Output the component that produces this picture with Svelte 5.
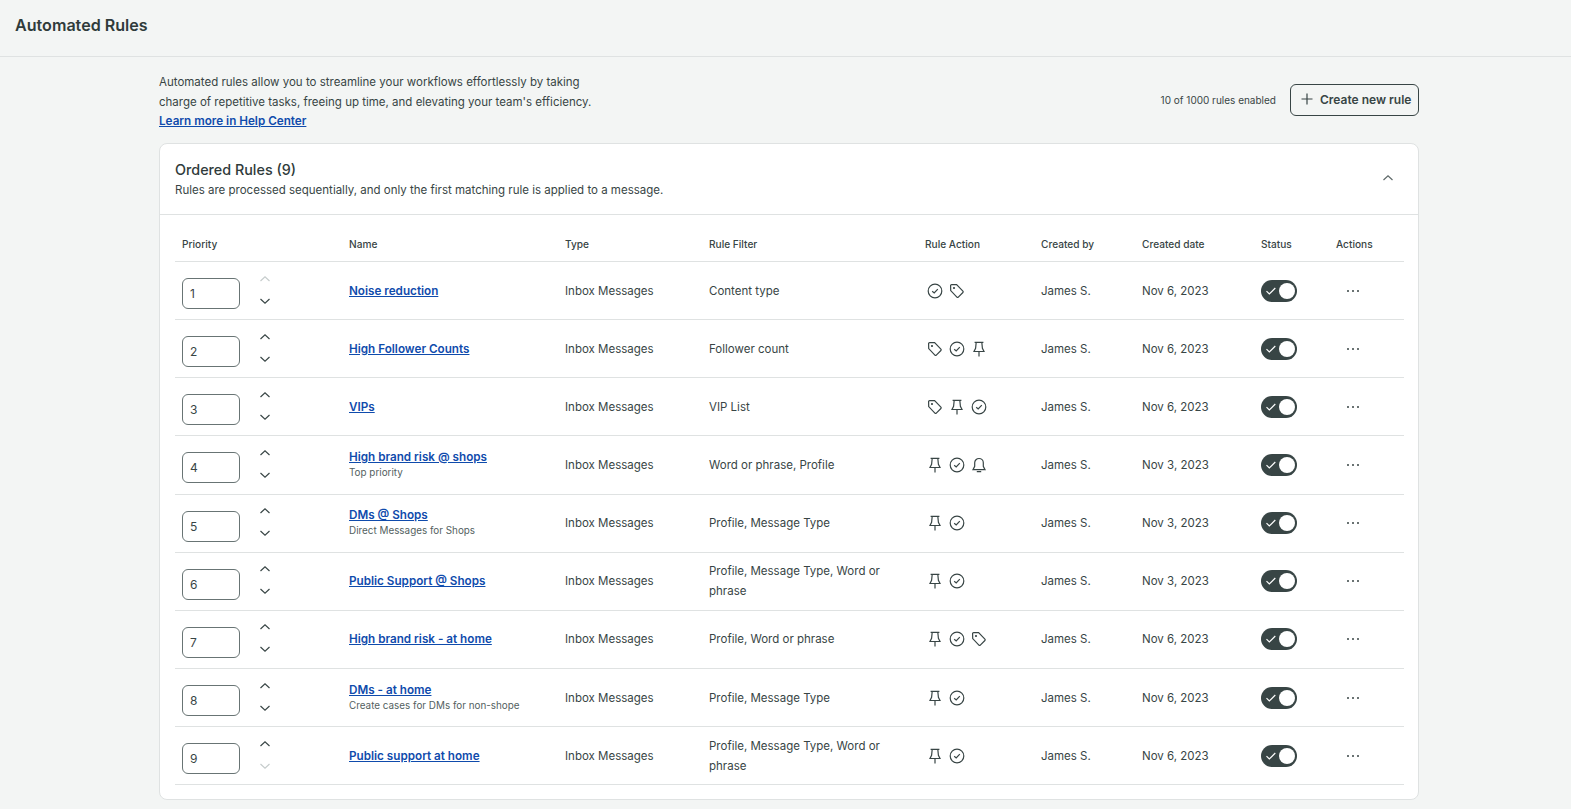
<script>
    const rules = [
        { name: 'Noise reduction', filter: 'Content type', icons: ['check', 'tag'], by: 'Nov 6, 2023' },
        { name: 'High Follower Counts', filter: 'Follower count', icons: ['tag', 'check', 'pin'], by: 'Nov 6, 2023' },
        { name: 'VIPs', filter: 'VIP List', icons: ['tag', 'pin', 'check'], by: 'Nov 6, 2023' },
        { name: 'High brand risk @ shops', sub: 'Top priority', filter: 'Word or phrase, Profile', icons: ['pin', 'check', 'bell'], by: 'Nov 3, 2023' },
        { name: 'DMs @ Shops', sub: 'Direct Messages for Shops', filter: 'Profile, Message Type', icons: ['pin', 'check'], by: 'Nov 3, 2023' },
        { name: 'Public Support @ Shops', filter: 'Profile, Message Type, Word or phrase', icons: ['pin', 'check'], by: 'Nov 3, 2023' },
        { name: 'High brand risk - at home', filter: 'Profile, Word or phrase', icons: ['pin', 'check', 'tag'], by: 'Nov 6, 2023' },
        { name: 'DMs - at home', sub: 'Create cases for DMs for non-shope', filter: 'Profile, Message Type', icons: ['pin', 'check'], by: 'Nov 6, 2023' },
        { name: 'Public support at home', filter: 'Profile, Message Type, Word or phrase', icons: ['pin', 'check'], by: 'Nov 6, 2023' },
    ];
    const headers = ['Priority', 'Name', 'Type', 'Rule Filter', 'Rule Action', 'Created by', 'Created date', 'Status', 'Actions'];
</script>

<header class="topbar"><h1>Automated Rules</h1></header>

<main>
    <section class="intro">
        <div class="intro-text">
            <p>Automated rules allow you to streamline your workflows effortlessly by taking<br />charge of repetitive tasks, freeing up time, and elevating your team's efficiency.</p>
            <a href="#help">Learn more in Help Center</a>
        </div>
        <div class="intro-actions">
            <span class="count">10 of 1000 rules enabled</span>
            <button class="create">
                <svg width="14" height="14" viewBox="0 0 14 14"><path d="M7 1.5v11M1.5 7h11" /></svg>
                Create new rule
            </button>
        </div>
    </section>

    <section class="card">
        <div class="card-head">
            <div>
                <h2>Ordered Rules (9)</h2>
                <p>Rules are processed sequentially, and only the first matching rule is applied to a message.</p>
            </div>
            <svg class="collapse" width="12" height="8" viewBox="0 0 12 8"><path d="M1.5 6 6 1.8 10.5 6" /></svg>
        </div>
        <div class="table-wrap">
            <table>
                <colgroup>
                    <col style="width:167px" /><col style="width:216px" /><col style="width:144px" /><col style="width:216px" /><col style="width:116px" /><col style="width:101px" /><col style="width:119px" /><col style="width:75px" /><col />
                </colgroup>
                <thead>
                    <tr>
                        {#each headers as h}<th>{h}</th>{/each}
                    </tr>
                </thead>
                <tbody>
                    {#each rules as rule, i}
                        <tr>
                            <td>
                                <div class="priority">
                                    <input type="text" value={i + 1} readonly />
                                    <div class="arrows">
                                        <svg class:off={i === 0} width="12" height="8" viewBox="0 0 12 8"><path d="M1.5 6 6 1.8 10.5 6" /></svg>
                                        <svg class:off={i === rules.length - 1} width="12" height="8" viewBox="0 0 12 8"><path d="M1.5 2 6 6.2 10.5 2" /></svg>
                                    </div>
                                </div>
                            </td>
                            <td>
                                <a class="rule-name" href="#rule">{rule.name}</a>
                                {#if rule.sub}<div class="sub">{rule.sub}</div>{/if}
                            </td>
                            <td>Inbox Messages</td>
                            <td class="filter">{rule.filter}</td>
                            <td>
                                <div class="icons">
                                    {#each rule.icons as icon}
                                        <svg width="16" height="16" viewBox="0 0 16 16">
                                            {#if icon === 'check'}
                                                <circle cx="8" cy="8" r="6.8" /><path d="M5.2 8.3 7.2 10l3.6-3.8" />
                                            {:else if icon === 'tag'}
                                                <path d="M1.6 2.6a1 1 0 0 1 1-1l5-.1 6.3 6.6a1 1 0 0 1 0 1.4l-4.6 4.6a1 1 0 0 1-1.4 0L1.7 7.6z" /><circle cx="5" cy="5" r=".5" />
                                            {:else if icon === 'pin'}
                                                <path d="M3.6 1.3h8.8M5.2 1.3l-.6 6-1.6 3.2h10l-1.6-3.2-.6-6M8 10.5v5" />
                                            {:else}
                                                <path d="M8 1.5a4.3 4.3 0 0 0-4.3 4.3v3.6L2 12.6h12l-1.7-3.2V5.8A4.3 4.3 0 0 0 8 1.5zM5.8 14.6h4.4" />
                                            {/if}
                                        </svg>
                                    {/each}
                                </div>
                            </td>
                            <td>James S.</td>
                            <td>{rule.by}</td>
                            <td>
                                <span class="toggle">
                                    <svg width="12" height="10" viewBox="0 0 12 10"><path d="M1.5 5.2 4.3 8l6-6" /></svg>
                                    <span class="knob"></span>
                                </span>
                            </td>
                            <td><span class="more"><i></i><i></i><i></i></span></td>
                        </tr>
                    {/each}
                </tbody>
            </table>
        </div>
    </section>
</main>

<style>
    :global(body) {
        background: #f3f5f4;
        color: #384545;
        font-family: Inter, "Liberation Sans", sans-serif;
    }

    .topbar {
        height: 56px;
        border-bottom: 1px solid #dfe2e2;
        display: flex;
        align-items: center;
        padding-left: 15px;
    }

    h1 {
        margin: 0 0 6px;
        font-size: 16.1px;
        font-weight: 600;
        color: #2f3b3b;
    }

    main {
        width: 1260px;
        margin-left: 159px;
    }

    .intro {
        display: flex;
        justify-content: space-between;
        align-items: center;
        height: 86px;
    }

    .intro-text {
        font-size: 11.5px;
        line-height: 20px;
        padding-top: 2px;
    }

    .intro-text p {
        margin: 0 0 -1px;
    }

    .intro-text a,
    .rule-name {
        color: #0f4bac;
        font-size: 11.7px;
        font-weight: 600;
        text-decoration: underline;
    }

    .intro-actions {
        display: flex;
        align-items: center;
        gap: 14px;
    }

    .count {
        font-size: 10px;
    }

    .create {
        display: flex;
        align-items: center;
        gap: 6px;
        height: 32px;
        width: 129px;
        padding: 0 0 2px 9px;
        border: 1px solid #384545;
        border-radius: 6px;
        background: transparent;
        color: #384545;
        font-family: inherit;
        font-size: 12px;
        font-weight: 600;
        white-space: nowrap;
    }

    svg path,
    svg circle {
        fill: none;
        stroke: #384545;
        stroke-width: 1.2;
    }

    .card {
        background: #fff;
        border: 1px solid #dfe2e2;
        border-radius: 8px;
        height: 655px;
    }

    .card-head {
        height: 70px;
        border-bottom: 1px solid #dfe2e2;
        display: flex;
        justify-content: space-between;
        align-items: center;
        padding: 0 24px 0 15px;
    }

    .collapse {
        margin-top: -2px;
    }

    .collapse path {
        stroke: #5d6868;
    }

    h2 {
        margin: 0;
        font-size: 14.35px;
        line-height: 20px;
        font-weight: 500;
        color: #2f3b3b;
    }

    .card-head p {
        margin: 1px 0 0;
        font-size: 11.5px;
        line-height: 18px;
    }

    .table-wrap {
        padding: 0 14px 0 15px;
    }

    table {
        width: 100%;
        table-layout: fixed;
        border-collapse: collapse;
        font-size: 11.5px;
    }

    th {
        height: 33px;
        padding: 12px 0 1px 7px;
        text-align: left;
        font-size: 10.15px;
        font-weight: 500;
        border-bottom: 1px solid #dfe2e2;
    }

    td {
        height: 57.15px;
        padding: 0 0 0 7px;
        border-bottom: 1px solid #dfe2e2;
    }

    .filter {
        line-height: 20px;
        padding-right: 18px;
    }

    .priority {
        display: flex;
        align-items: center;
        gap: 19px;
    }

    input {
        box-sizing: border-box;
        width: 58px;
        height: 31px;
        margin-top: 6px;
        padding: 0 0 0 7px;
        border: 1px solid #687474;
        border-radius: 6px;
        color: #384545;
        font-family: inherit;
        font-size: 12px;
    }

    .arrows {
        display: flex;
        flex-direction: column;
        gap: 14px;
        margin-top: -2px;
    }

    .arrows svg {
        display: block;
    }

    .arrows .off path {
        stroke: #c6cccc;
    }

    .sub {
        font-size: 9.9px;
        margin-top: 2px;
        padding-bottom: 2px;
        color: #545f5f;
    }

    .icons {
        display: flex;
        gap: 6px;
        padding-left: 2px;
    }

    .toggle {
        box-sizing: border-box;
        width: 36px;
        height: 22px;
        border-radius: 11px;
        background: #384545;
        display: flex;
        align-items: center;
        justify-content: space-between;
        padding: 0 2px 0 4px;
    }

    .toggle path {
        stroke: #fff;
    }

    .knob {
        width: 16px;
        height: 16px;
        border-radius: 50%;
        background: #fff;
    }

    .more {
        display: flex;
        gap: 3px;
        padding-left: 11px;
    }

    .more i {
        width: 2px;
        height: 2px;
        border-radius: 50%;
        background: #384545;
    }
</style>
